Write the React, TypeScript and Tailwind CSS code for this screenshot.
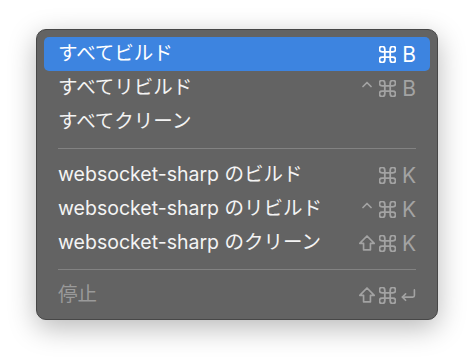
import type { ReactNode } from "react";

type Mod = "ctrl" | "cmd" | "shift";

type Item = {
  label: string;
  mods?: Mod[];
  keyName?: ReactNode;
  active?: boolean;
  disabled?: boolean;
};

function CmdIcon() {
  return (
    <svg width="17" height="17" viewBox="2.5 2.5 19 19" fill="none" stroke="currentColor" strokeWidth="2" strokeLinecap="round" strokeLinejoin="round">
      <path d="M15 6v12a3 3 0 1 0 3-3H6a3 3 0 1 0 3 3V6a3 3 0 1 0-3 3h12a3 3 0 1 0-3-3" />
    </svg>
  );
}

function ShiftIcon() {
  return (
    <svg width="16" height="16" viewBox="1.5 1.5 21 21" fill="none" stroke="currentColor" strokeWidth="2.2" strokeLinejoin="round">
      <path d="M12 2.8 21.5 12.5h-5V21h-9v-8.5h-5Z" />
    </svg>
  );
}

function CtrlIcon() {
  return (
    <svg width="10" height="17" viewBox="0 0 10 17" fill="none" stroke="currentColor" strokeWidth="1.7" strokeLinecap="round" strokeLinejoin="round">
      <path d="M1 6.5 5 2.5l4 4" />
    </svg>
  );
}

function ReturnIcon() {
  return (
    <svg width="20" height="17" viewBox="0 0 20 17" fill="none" stroke="currentColor" strokeWidth="2" strokeLinecap="round" strokeLinejoin="round">
      <path d="M18 1.5v7a2 2 0 0 1-2 2H3" />
      <path d="M7 6.5 3 10.5l4 4" />
    </svg>
  );
}

function ModIcon({ mod }: { mod: Mod }) {
  if (mod === "cmd") return <CmdIcon />;
  if (mod === "shift") return <ShiftIcon />;
  return <CtrlIcon />;
}

function MenuRow({ label, mods, keyName, active, disabled }: Item) {
  return (
    <div
      className={
        "flex h-[34px] items-center justify-between rounded-[5px] px-[14px] " +
        (active ? "bg-[#3d84e0] text-white" : disabled ? "text-[#9a9a9a]" : "text-[#f4f4f4]")
      }
    >
      <span>{label}</span>
      <span className={"flex items-center " + (active ? "text-white" : "text-[#a3a3a3]")}>
        {mods?.map((m, i) => (
          <span key={i} className={"flex " + (i > 0 ? (mods[i - 1] === "ctrl" ? "ml-[7px]" : "ml-[4px]") : "")}>
            <ModIcon mod={m} />
          </span>
        ))}
        {keyName ? (
          <span className="ml-[4px] flex w-[16px] justify-end text-[21px] leading-none">{keyName}</span>
        ) : null}
      </span>
    </div>
  );
}

function Separator({ h }: { h: string }) {
  return (
    <div className={"flex items-center px-[14px] " + h}>
      <div className="h-px w-full bg-[#828282]" />
    </div>
  );
}

export default function App() {
  return (
    <div className="min-h-screen bg-white pl-[36px] pt-[29px]">
      <div className="w-[402px] rounded-[10px] border border-[#474747] bg-[#636363] p-[7px] font-['Inter','Noto_Sans_CJK_JP',sans-serif] text-[19.5px] font-normal shadow-[0_8px_28px_rgba(0,0,0,0.28)]">
        <MenuRow label="すべてビルド" mods={["cmd"]} keyName="B" active />
        <MenuRow label="すべてリビルド" mods={["ctrl", "cmd"]} keyName="B" />
        <MenuRow label="すべてクリーン" />
        <Separator h="h-[19px]" />
        <MenuRow label="websocket-sharp のビルド" mods={["cmd"]} keyName="K" />
        <MenuRow label="websocket-sharp のリビルド" mods={["ctrl", "cmd"]} keyName="K" />
        <MenuRow label="websocket-sharp のクリーン" mods={["shift", "cmd"]} keyName="K" />
        <Separator h="h-[18px]" />
        <MenuRow label="停止" mods={["shift", "cmd"]} keyName={<ReturnIcon />} disabled />
      </div>
    </div>
  );
}
